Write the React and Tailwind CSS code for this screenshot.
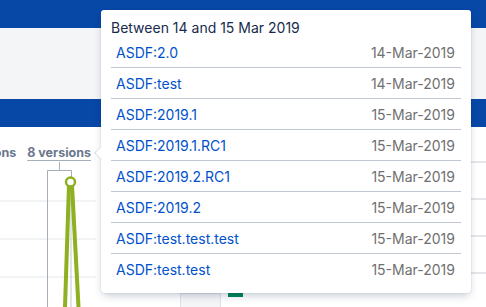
const versions = [
  { name: 'ASDF:2.0', date: '14-Mar-2019' },
  { name: 'ASDF:test', date: '14-Mar-2019' },
  { name: 'ASDF:2019.1', date: '15-Mar-2019' },
  { name: 'ASDF:2019.1.RC1', date: '15-Mar-2019' },
  { name: 'ASDF:2019.2.RC1', date: '15-Mar-2019' },
  { name: 'ASDF:2019.2', date: '15-Mar-2019' },
  { name: 'ASDF:test.test.test', date: '15-Mar-2019' },
  { name: 'ASDF:test.test', date: '15-Mar-2019' },
];

function Chart() {
  return (
    <svg className="absolute inset-0" width="486" height="180" viewBox="0 0 486 180">
      {/* grid lines */}
      {[74, 112, 150].map((y) => (
        <line key={y} x1="0" y1={y} x2="96" y2={y} stroke="#e4e6ea" strokeWidth="1" />
      ))}
      {[35, 72, 109, 146].map((y) => (
        <line key={y} x1="471" y1={y} x2="486" y2={y} stroke="#c8ccd2" strokeWidth="1" />
      ))}
      {/* bracket from label */}
      <path d="M59.5 35 V43.5 M47.5 180 V43.5 H71.5 V50" fill="none" stroke="#a5adba" strokeWidth="1" />
      <line x1="71" y1="60" x2="71" y2="180" stroke="#c1c7d0" strokeWidth="1" />
      {/* release lines */}
      <line x1="69" y1="58" x2="65" y2="180" stroke="#8eb021" strokeWidth="4" />
      <line x1="72" y1="58" x2="78.5" y2="180" stroke="#8eb021" strokeWidth="4" />
      <circle cx="70.5" cy="55" r="4.5" fill="#fff" stroke="#8eb021" strokeWidth="2.5" />
      {/* bottom fragments */}
      <rect x="180.5" y="166.5" width="40" height="14" fill="#f4f5f7" stroke="#dfe1e6" strokeWidth="1" />
      <rect x="228" y="165" width="15" height="5" fill="#00875a" />
    </svg>
  );
}

export default function App() {
  return (
    <div className="relative w-[486px] h-[307px] overflow-hidden bg-white font-['Inter','Liberation_Sans',sans-serif]">
      <div className="h-[28px] bg-[#0747a6]" />
      <div className="h-[71px] bg-[#f4f5f7]" />
      <div className="h-[28px] bg-[#0747a6]" />

      <div className="relative h-[180px]">
        <Chart />
        <div className="relative flex justify-end w-[91px] pt-[18px] gap-[11px] text-[12.5px] leading-[16px] font-bold text-[#6b778c] whitespace-nowrap">
          <span className="shrink-0">ons</span>
          <span className="shrink-0 underline decoration-[#a5adba] underline-offset-[3px]">8 versions</span>
        </div>
      </div>

      {/* versions popup */}
      <div className="absolute left-[101px] top-[10px] w-[370px] bg-white rounded-[3px] px-[10px] pt-[9px] pb-[9px] shadow-[0_4px_8px_-2px_rgba(9,30,66,0.25),0_0_1px_rgba(9,30,66,0.31)]">
        <div className="absolute left-[-5px] top-[138px] w-[10px] h-[10px] rotate-45 bg-white border-l border-b border-[#dfe1e6]" />
        <div className="relative text-[14px] leading-[18px] text-[#172b4d]">Between 14 and 15 Mar 2019</div>
        <div className="relative flex flex-col">
          {versions.map((v, i) => (
            <div
              key={v.name}
              className={`flex items-center justify-between h-[30px] pl-[5px] pr-[6px] text-[14px] box-content ${
                i > 0 ? 'border-t border-[#c1c7d0]' : ''
              }`}
            >
              <span className="text-[#0052cc]">{v.name}</span>
              <span className="text-[#707070]">{v.date}</span>
            </div>
          ))}
        </div>
      </div>
    </div>
  );
}
